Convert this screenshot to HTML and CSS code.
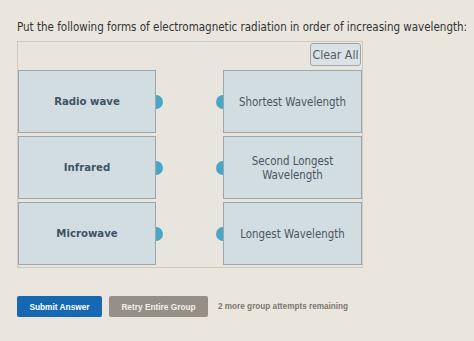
FILE: index.html
```html
<!DOCTYPE html>
<html>
<head>
<meta charset="utf-8">
<link rel="stylesheet" href="styles.css">
</head>
<body>
<div class="page">
  <p class="question">Put the following forms of electromagnetic radiation in order of increasing wavelength:</p>
  <div class="panel">
    <div class="toolbar"><button class="clear">Clear All</button></div>
    <div class="match">
      <div class="col left">
        <div class="card item"><span>Radio wave</span><i class="dot right-dot"></i></div>
        <div class="card item"><span>Infrared</span><i class="dot right-dot"></i></div>
        <div class="card item"><span>Microwave</span><i class="dot right-dot"></i></div>
      </div>
      <div class="col right">
        <div class="card target"><span>Shortest Wavelength</span><i class="dot left-dot"></i></div>
        <div class="card target"><span>Second Longest<br>Wavelength</span><i class="dot left-dot"></i></div>
        <div class="card target"><span>Longest Wavelength</span><i class="dot left-dot"></i></div>
      </div>
    </div>
  </div>
  <div class="actions">
    <button class="btn submit">Submit Answer</button>
    <button class="btn retry">Retry Entire Group</button>
    <span class="remaining">2 more group attempts remaining</span>
  </div>
</div>
</body>
</html>
```
FILE: styles.css
```css
html, body {
  margin: 0;
  padding: 0;
  background: #ebe6dd;
}
.page {
  width: 474px;
  height: 341px;
  box-sizing: border-box;
  padding: 19px 0 0 17px;
  font-family: "DejaVu Sans Condensed", "DejaVu Sans", Verdana, sans-serif;
}
.question {
  margin: 0;
  font-size: 11.5px;
  line-height: 16px;
  color: #2f3338;
  white-space: nowrap;
}
.panel {
  margin-top: 6px;
  width: 346px;
  height: 227px;
  box-sizing: border-box;
  border: 1px solid #cfcac2;
  background: #e8e5df;
  display: flex;
  flex-direction: column;
}
.toolbar {
  display: flex;
  justify-content: flex-end;
  padding: 1px 1px 0 0;
  height: 27px;
  box-sizing: border-box;
}
.clear {
  width: 51px;
  height: 23px;
  border: 1px solid #9fa7aa;
  border-radius: 3px;
  background: #dbe2e5;
  font-family: "DejaVu Sans Condensed", "DejaVu Sans", Verdana, sans-serif;
  font-size: 12.3px;
  color: #555b60;
  padding: 0;
}
.match {
  display: flex;
  justify-content: space-between;
  padding-top: 1px;
}
.col {
  display: flex;
  flex-direction: column;
  gap: 3px;
}
.card {
  position: relative;
  height: 63px;
  box-sizing: border-box;
  border: 1px solid #9ea6aa;
  background: #d2dde2;
  display: flex;
  align-items: center;
  justify-content: center;
  text-align: center;
}
.item {
  width: 138px;
  font-weight: bold;
  font-size: 11.3px;
  color: #3f5364;
}
.target {
  width: 139px;
  font-size: 11.4px;
  line-height: 14px;
  color: #4b5560;
}
.dot {
  position: absolute;
  top: 50%;
  width: 7px;
  height: 14px;
  margin-top: -7px;
  background: #4aa6c6;
}
.right-dot {
  right: -8px;
  border-radius: 0 7px 7px 0;
}
.left-dot {
  left: -8px;
  border-radius: 7px 0 0 7px;
}
.actions {
  margin-top: 28px;
  display: flex;
  align-items: center;
  gap: 7px;
}
.btn {
  height: 21px;
  border: none;
  border-radius: 2px;
  color: #fff;
  font-family: "Liberation Sans", Arial, sans-serif;
  font-weight: bold;
  font-size: 8.3px;
  padding: 0;
}
.submit {
  width: 85px;
  background: #1668b2;
}
.retry {
  width: 99px;
  background: #958f88;
  color: #f2efea;
}
.remaining {
  margin-left: 3px;
  font-family: "Liberation Sans", Arial, sans-serif;
  font-weight: bold;
  font-size: 8.2px;
  color: #7b7670;
}
```
